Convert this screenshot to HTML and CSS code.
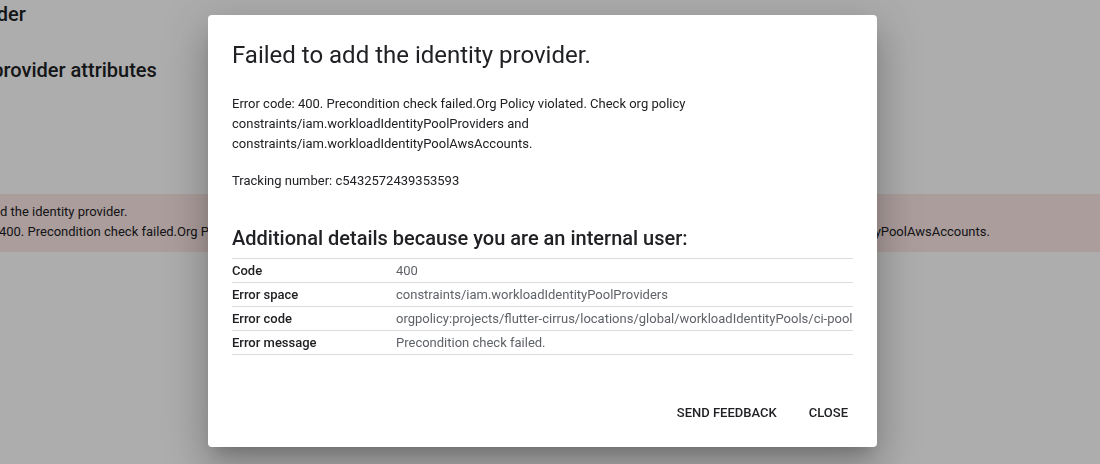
FILE: index.html
```html
<!DOCTYPE html>
<html lang="en">
<head>
  <meta charset="UTF-8">
  <title>Add a provider</title>
  <link rel="stylesheet" href="styles.css">
</head>
<body>
  <div class="page">
    <h1 class="page-title">Add a provider</h1>
    <h2 class="section-title">Configure provider attributes</h2>
    <div class="banner">
      <div>Failed to add the identity provider.</div>
      <div>Error code: 400. Precondition check failed.Org Policy violated. Check org policy constraints/iam.workloadIdentityPoolProviders and constraints/iam.workloadIdentityPoolAwsAccounts.</div>
    </div>
  </div>

  <div class="scrim"></div>

  <div class="dialog">
    <h2 class="dialog-title">Failed to add the identity provider.</h2>
    <p class="msg">Error code: 400. Precondition check failed.Org Policy violated. Check org policy constraints/iam.workloadIdentityPoolProviders and constraints/iam.workloadIdentityPoolAwsAccounts.</p>
    <p class="msg tracking">Tracking number: c5432572439353593</p>
    <h3 class="details-title">Additional details because you are an internal user:</h3>
    <table class="details">
      <tr><th>Code</th><td>400</td></tr>
      <tr><th>Error space</th><td>constraints/iam.workloadIdentityPoolProviders</td></tr>
      <tr><th>Error code</th><td>orgpolicy:projects/flutter-cirrus/locations/global/workloadIdentityPools/ci-pool</td></tr>
      <tr><th>Error message</th><td>Precondition check failed.</td></tr>
    </table>
    <div class="actions">
      <button class="btn" type="button">Send feedback</button>
      <button class="btn" type="button">Close</button>
    </div>
  </div>
</body>
</html>
```

FILE: styles.css
```css
* { box-sizing: border-box; }

body {
  margin: 0;
  height: 100vh;
  overflow: hidden;
  background: #fff;
  font-family: Roboto, "Liberation Sans", sans-serif;
  color: #202124;
}

/* Page behind the dialog */
.page-title,
.section-title {
  margin: 0;
  font-size: 20px;
  font-weight: 500;
  line-height: 28px;
  white-space: nowrap;
}
.page-title { margin-left: -104px; }
.section-title { margin: 28px 0 0 -100px; }

.banner {
  margin-top: 110px;
  padding: 8px 0 10px 0;
  background: #fce8e6;
  font-size: 13px;
  line-height: 20px;
  white-space: nowrap;
}
.banner div { margin-left: -67px; }

.scrim {
  position: fixed;
  inset: 0;
  background: rgba(0,0,0,0.32);
}

/* Dialog */
.dialog {
  position: absolute;
  top: 15px;
  left: 208px;
  width: 669px;
  padding: 24px 24px 17px;
  background: #fff;
  border-radius: 4px;
  box-shadow: 0 11px 15px -7px rgba(0,0,0,.2), 0 24px 38px 3px rgba(0,0,0,.14), 0 9px 46px 8px rgba(0,0,0,.12);
}
.dialog-title {
  margin: 0;
  font-size: 24px;
  font-weight: 400;
  line-height: 32px;
  color: #202124;
}
.msg {
  max-width: 480px;
  margin: 23px 0 0;
  font-size: 13px;
  line-height: 20px;
  color: #202124;
}
.msg.tracking { margin-top: 17px; }

.details-title {
  margin: 33px 0 6px;
  font-size: 20px;
  font-weight: 500;
  line-height: 28px;
}
.details {
  width: 100%;
  border-collapse: collapse;
  border-top: 1px solid #dadce0;
  font-size: 13px;
}
.details th,
.details td {
  height: 24px;
  padding: 0;
  border-bottom: 1px solid #dadce0;
  text-align: left;
  white-space: nowrap;
}
.details th { width: 164px; font-weight: 500; color: #202124; }
.details td { color: #5f6368; }

.actions {
  display: flex;
  justify-content: flex-end;
  margin: 39px -11px 0 0;
}
.btn {
  min-width: 64px;
  height: 36px;
  padding: 0 16px;
  border: none;
  background: transparent;
  font-family: inherit;
  font-size: 13px;
  font-weight: 500;
  text-transform: uppercase;
  color: #202124;
  cursor: pointer;
}
```
